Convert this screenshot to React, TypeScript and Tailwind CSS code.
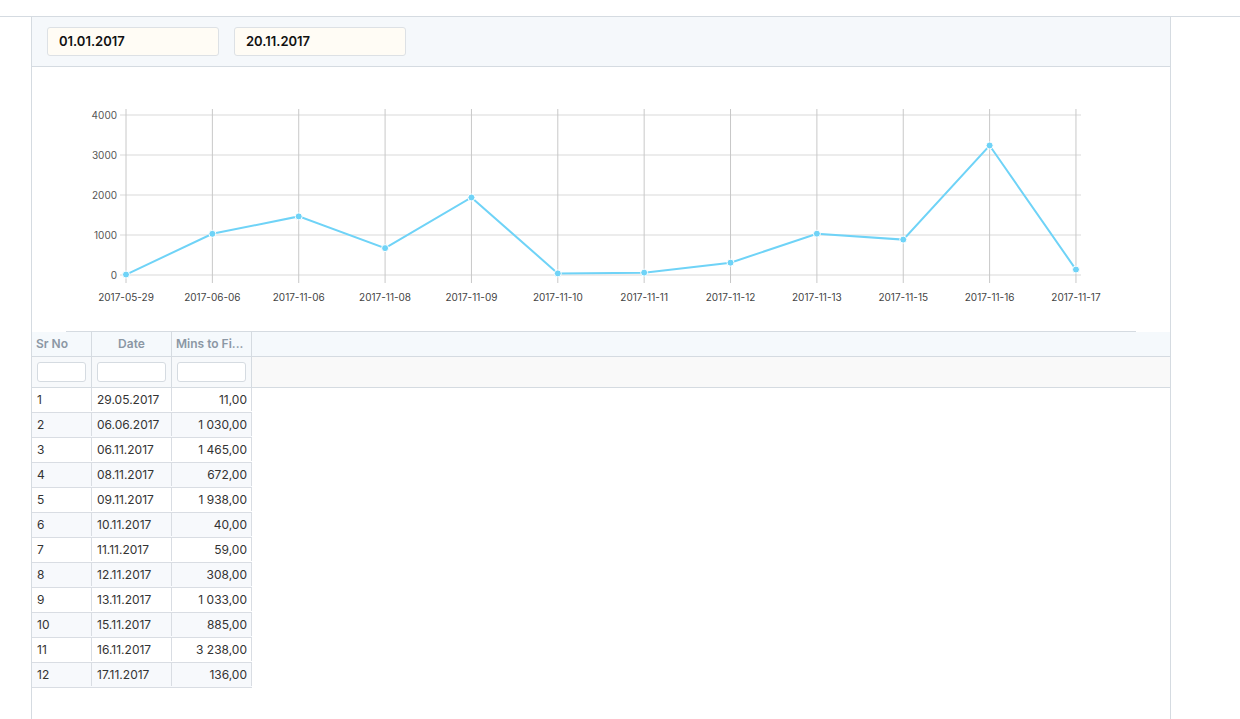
import React from 'react';

interface Row {
  no: number;
  date: string;
  mins: string;
  value: number;
  label: string;
}

const rows: Row[] = [
  { no: 1, date: '29.05.2017', mins: '11,00', value: 11, label: '2017-05-29' },
  { no: 2, date: '06.06.2017', mins: '1 030,00', value: 1030, label: '2017-06-06' },
  { no: 3, date: '06.11.2017', mins: '1 465,00', value: 1465, label: '2017-11-06' },
  { no: 4, date: '08.11.2017', mins: '672,00', value: 672, label: '2017-11-08' },
  { no: 5, date: '09.11.2017', mins: '1 938,00', value: 1938, label: '2017-11-09' },
  { no: 6, date: '10.11.2017', mins: '40,00', value: 40, label: '2017-11-10' },
  { no: 7, date: '11.11.2017', mins: '59,00', value: 59, label: '2017-11-11' },
  { no: 8, date: '12.11.2017', mins: '308,00', value: 308, label: '2017-11-12' },
  { no: 9, date: '13.11.2017', mins: '1 033,00', value: 1033, label: '2017-11-13' },
  { no: 10, date: '15.11.2017', mins: '885,00', value: 885, label: '2017-11-15' },
  { no: 11, date: '16.11.2017', mins: '3 238,00', value: 3238, label: '2017-11-16' },
  { no: 12, date: '17.11.2017', mins: '136,00', value: 136, label: '2017-11-17' },
];

// chart coords are relative to the chart box (page x - 32, page y - 67)
const X0 = 94;
const STEP = 86.36;
const Y0 = 208;
const px = (i: number) => X0 + i * STEP;
const py = (v: number) => Y0 - v * 0.04;

const Chart: React.FC = () => {
  const points = rows.map((r, i) => `${px(i)},${py(r.value)}`).join(' ');
  return (
    <svg width="1138" height="264" className="block">
      {[0, 1000, 2000, 3000, 4000].map(v => (
        <g key={v}>
          <line x1={88} x2={1049} y1={py(v)} y2={py(v)} stroke="#e6e6e6" strokeWidth={1.5} />
          <text x={85} y={py(v) + 3.5} fontSize={10} fill="#555" textAnchor="end">
            {v}
          </text>
        </g>
      ))}
      {rows.map((r, i) => (
        <g key={r.label}>
          <line x1={px(i)} x2={px(i)} y1={42} y2={216} stroke="#c8c8c8" strokeWidth={1} />
          <text x={px(i)} y={234} fontSize={10} fill="#444" textAnchor="middle">
            {r.label}
          </text>
        </g>
      ))}
      <polyline points={points} fill="none" stroke="#6fd3f7" strokeWidth={2} />
      {rows.map((r, i) => (
        <circle key={r.no} cx={px(i)} cy={py(r.value)} r={3.5} fill="#6fd3f7" stroke="#fff" strokeWidth={1} />
      ))}
    </svg>
  );
};

export default function App() {
  return (
    <div className="min-h-[719px] bg-white text-[#333]" style={{ fontFamily: 'Inter, "Open Sans", sans-serif' }}>
      <div className="mt-[16px] border-t border-[#d5dbe1]">
        <div className="ml-[31px] w-[1140px] min-h-[702px] border-l border-r border-[#d5dbe1]">
          <div className="h-[50px] bg-[#f5f8fb] border-b border-[#d5dbe1] flex items-center gap-[15px] pl-[15px]">
            <div className="w-[172px] h-[29px] bg-[#fffcf5] border border-[#dde1e5] rounded-[3px] flex items-center pl-[11px] text-[13px] font-semibold text-[#111]">
              01.01.2017
            </div>
            <div className="w-[172px] h-[29px] bg-[#fffcf5] border border-[#dde1e5] rounded-[3px] flex items-center pl-[11px] text-[13px] font-semibold text-[#111]">
              20.11.2017
            </div>
          </div>

          <div className="h-[264px]">
            <Chart />
          </div>
          <div className="mx-[34px] border-b border-[#d5dbe1]" />

          <div className="flex h-[25px] bg-[#f5f9fc] border-b border-[#d5dbe1] text-[12px] font-semibold text-[#8b97a4]">
            <div className="w-[60px] border-r border-[#d5dbe1] flex items-center pl-[4px]">Sr No</div>
            <div className="w-[80px] border-r border-[#d5dbe1] flex items-center justify-center">Date</div>
            <div className="w-[80px] border-r border-[#d5dbe1] flex items-center pl-[4px] truncate">Mins to Fi...</div>
            <div className="flex-1" />
          </div>
          <div className="flex h-[31px] bg-[#f9f9f9] border-b border-[#d5dbe1]">
            {[60, 80, 80].map((w, i) => (
              <div
                key={i}
                className={`border-r border-[#d5dbe1] bg-[#f7f9fb] flex items-center px-[5px] ${w === 60 ? 'w-[60px]' : 'w-[80px]'}`}
              >
                <div className="w-full h-[20px] bg-white border border-[#d5dbe1] rounded-[3px]" />
              </div>
            ))}
            <div className="flex-1" />
          </div>

          <div className="w-[220px] text-[12px] text-[#333]">
            {rows.map(r => (
              <div
                key={r.no}
                className={`flex h-[25px] pb-[1px] border-b border-[#d9dde3] ${r.no % 2 === 0 ? 'bg-[#f7f9fc]' : 'bg-white'}`}
              >
                <div className="w-[60px] border-r border-[#d9dde3] flex items-center pl-[5px]">{r.no}</div>
                <div className="w-[80px] border-r border-[#d9dde3] flex items-center pl-[5px]">{r.date}</div>
                <div className="w-[80px] border-r border-[#d9dde3] flex items-center justify-end pr-[4px]">{r.mins}</div>
              </div>
            ))}
          </div>
        </div>
      </div>
    </div>
  );
}
